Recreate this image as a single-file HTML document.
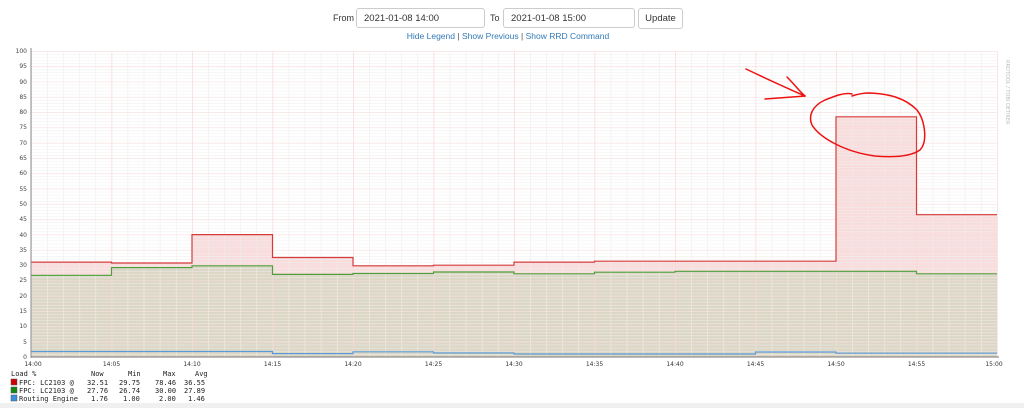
<!DOCTYPE html>
<html><head><meta charset="utf-8"><style>
body{margin:0;width:1024px;height:408px;background:#fff;font-family:"Liberation Sans",sans-serif;position:relative;overflow:hidden}
.lbl{position:absolute;font-size:9px;color:#333}
.inp{position:absolute;border:1px solid #ccc;border-radius:3px;height:20px;box-sizing:border-box;font-size:9.5px;color:#333;padding:4px 7px;background:#fff}
.btn{position:absolute;border:1px solid #ccc;border-radius:3px;font-size:9.5px;color:#333;background:#fff;box-sizing:border-box;text-align:center;padding-top:4px}
.links{position:absolute;left:0;width:1016px;top:31px;text-align:center;font-size:8.5px;color:#337ab7}
.links span{color:#555}
</style></head><body>
<div class="lbl" style="left:333px;top:13px">From</div>
<div class="inp" style="left:356px;top:8px;width:129px">2021-01-08 14:00</div>
<div class="lbl" style="left:490px;top:13px">To</div>
<div class="inp" style="left:503px;top:8px;width:132px">2021-01-08 15:00</div>
<div class="btn" style="left:638px;top:8px;width:45px;height:21px">Update</div>
<div class="links">Hide Legend <span>|</span> Show Previous <span>|</span> Show RRD Command</div>
<svg width="1024" height="408" style="position:absolute;left:0;top:0" xmlns="http://www.w3.org/2000/svg">
<defs>
<pattern id="hm" x="0" y="51" width="10" height="3.06" patternUnits="userSpaceOnUse"><rect x="0" y="0" width="10" height="0.5" fill="#f0f0f0"/></pattern>
<pattern id="hM" x="0" y="51" width="10" height="15.3" patternUnits="userSpaceOnUse"><rect x="0" y="0" width="10" height="0.6" fill="#fadede"/></pattern>
<pattern id="vm" x="31" y="0" width="16.1" height="10" patternUnits="userSpaceOnUse"><rect x="0" y="0" width="0.6" height="10" fill="#ededed"/></pattern>
<pattern id="vM" x="31" y="0" width="80.5" height="10" patternUnits="userSpaceOnUse"><rect x="0" y="0" width="0.7" height="10" fill="#f8d8d8"/></pattern>
</defs>
<path d="M31 262.1H111.5V263H192V234.6H272.5V257.5H353V265.8H433.5V265.2H514V262.1H594.5V261.2H836V116.8H916.5V214.7H997V357H31Z" fill="#f9dcdc" stroke="none"/>
<path d="M31 275.3H111.5V267.6H192V265.8H272.5V274.4H353V273.5H433.5V272H514V273.8H594.5V272.2H675V271.3H916.5V273.8H997V357H31Z" fill="#dcd6c5"/>
<rect x="31" y="51" width="966" height="306" fill="url(#hm)"/>
<rect x="31" y="51" width="966" height="306" fill="url(#vm)"/>
<rect x="31" y="51" width="966" height="306" fill="url(#hM)"/>
<rect x="31" y="51" width="967" height="306" fill="url(#vM)"/>
<path d="M31 262.1H111.5V263H192V234.6H272.5V257.5H353V265.8H433.5V265.2H514V262.1H594.5V261.2H836V116.8H916.5V214.7H997" fill="none" stroke="#d63c3c" stroke-width="1.2"/>
<path d="M31 275.3H111.5V267.6H192V265.8H272.5V274.4H353V273.5H433.5V272H514V273.8H594.5V272.2H675V271.3H916.5V273.8H997" fill="none" stroke="#4c9f3c" stroke-width="1.2"/>
<path d="M31 351.5H272.5V353.6H353V351.8H433.5V353H514V354H755.5V352H836V353.2H997" fill="none" stroke="#5b9ad8" stroke-width="1.2"/>
<line x1="31" y1="357" x2="999" y2="357" stroke="#777" stroke-width="1"/>
<line x1="31" y1="48" x2="31" y2="358" stroke="#888" stroke-width="1"/>
<g font-family="DejaVu Sans,sans-serif" font-size="6" fill="#444" text-anchor="end">
<text x="27" y="53">100</text><text x="27" y="68">95</text><text x="27" y="84">90</text><text x="27" y="99">85</text><text x="27" y="114">80</text><text x="27" y="129">75</text><text x="27" y="145">70</text><text x="27" y="160">65</text><text x="27" y="175">60</text><text x="27" y="191">55</text><text x="27" y="206">50</text><text x="27" y="221">45</text><text x="27" y="237">40</text><text x="27" y="252">35</text><text x="27" y="267">30</text><text x="27" y="282">25</text><text x="27" y="298">20</text><text x="27" y="313">15</text><text x="27" y="328">10</text><text x="27" y="344">5</text><text x="27" y="359">0</text>
</g>
<g font-family="DejaVu Sans,sans-serif" font-size="6" fill="#333" text-anchor="middle">
<text x="33" y="366">14:00</text><text x="111.5" y="366">14:05</text><text x="192" y="366">14:10</text><text x="272.5" y="366">14:15</text><text x="353" y="366">14:20</text><text x="433.5" y="366">14:25</text><text x="514" y="366">14:30</text><text x="594.5" y="366">14:35</text><text x="675" y="366">14:40</text><text x="755.5" y="366">14:45</text><text x="836" y="366">14:50</text><text x="916.5" y="366">14:55</text><text x="994" y="366">15:00</text>
</g>
<text x="1006" y="60" transform="rotate(90 1006 60)" font-family="DejaVu Sans,sans-serif" font-size="5" fill="#bbb">RRDTOOL / TOBI OETIKER</text>
<g font-family="DejaVu Sans Mono,Liberation Mono,monospace" font-size="7" fill="#222" xml:space="preserve">
<text x="11" y="376">Load %</text><text x="91" y="376">Now</text><text x="128" y="376">Min</text><text x="163" y="376">Max</text><text x="195" y="376">Avg</text>
<rect x="11" y="379" width="6" height="6" fill="#cc0000" stroke="#555" stroke-width="0.5"/><text x="19" y="385">FPC: LC2103 @</text><text x="87" y="385">32.51</text><text x="119" y="385">29.75</text><text x="155" y="385">78.46</text><text x="184" y="385">36.55</text>
<rect x="11" y="387" width="6" height="6" fill="#118811" stroke="#555" stroke-width="0.5"/><text x="19" y="393">FPC: LC2103 @</text><text x="87" y="393">27.76</text><text x="119" y="393">26.74</text><text x="155" y="393">30.00</text><text x="184" y="393">27.89</text>
<rect x="11" y="395" width="6" height="6" fill="#3a8ee0" stroke="#555" stroke-width="0.5"/><text x="19" y="401">Routing Engine</text><text x="91" y="401">1.76</text><text x="123" y="401">1.00</text><text x="159" y="401">2.00</text><text x="188" y="401">1.46</text>
</g>
<rect x="0" y="403" width="1024" height="5" fill="#f0f0f0"/>
<g fill="none" stroke="#ee1111" stroke-width="1.5" stroke-linecap="round">
<path d="M746 69C765 78 782 86 805 96"/>
<path d="M787 77C795 85 800 92 805 96"/>
<path d="M765 99C780 98 792 97 805 96"/>
<path d="M852 94C845 92 835 96 825 100C812 106 808 116 812 125C820 138 845 152 875 156C900 158 913 155 920 150C928 142 925 120 917 110C905 98 890 94 870 93C860 93 855 95 852 96"/>
</g>
</svg>
</body></html>
